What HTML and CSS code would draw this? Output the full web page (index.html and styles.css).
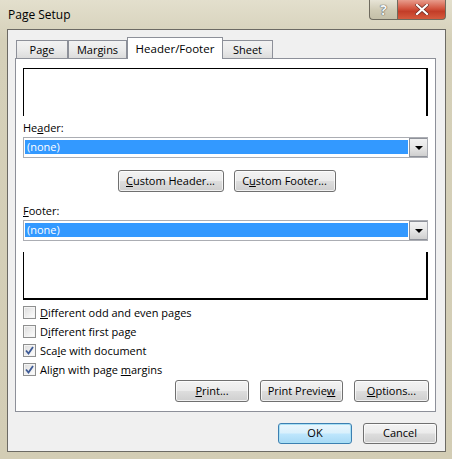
FILE: index.html
```html
<!DOCTYPE html>
<html>
<head>
<meta charset="utf-8">
<link rel="stylesheet" href="styles.css">
</head>
<body>
<div class="window">
  <div class="titlebar">
    <span class="title">Page Setup</span>
    <div class="caption-btns">
      <div class="cap help">?</div>
      <div class="cap close">
        <svg width="14" height="11" viewBox="0 0 14 11"><path d="M2 1 L12 10 M12 1 L2 10" stroke="#6b2a22" stroke-width="3.6" stroke-linecap="square"/><path d="M2 1 L12 10 M12 1 L2 10" stroke="#ffffff" stroke-width="2.2" stroke-linecap="square"/></svg>
      </div>
    </div>
  </div>
  <div class="client">
    <div class="tabs">
      <div class="tab t-page">Page</div>
      <div class="tab t-margins">Margins</div>
      <div class="tab active t-hf">Header/Footer</div>
      <div class="tab t-sheet">Sheet</div>
    </div>
    <div class="panel">
      <div class="preview preview-top"></div>
      <div class="label">He<u>a</u>der:</div>
      <div class="combo">
        <div class="combo-value">(none)</div>
        <div class="combo-btn"><span class="tri"></span></div>
      </div>
      <div class="row-center">
        <div class="btn btn-ch"><u>C</u>ustom Header...</div>
        <div class="btn btn-cf">C<u>u</u>stom Footer...</div>
      </div>
      <div class="label label-footer"><u>F</u>ooter:</div>
      <div class="combo">
        <div class="combo-value">(none)</div>
        <div class="combo-btn"><span class="tri"></span></div>
      </div>
      <div class="preview preview-bottom"></div>
      <div class="checks">
        <div class="check"><span class="box"></span><span><u>D</u>ifferent odd and even pages</span></div>
        <div class="check"><span class="box"></span><span>D<u>i</u>fferent first page</span></div>
        <div class="check"><span class="box"><svg width="11" height="11" viewBox="0 0 11 11"><path d="M2 5.5 L4.5 8.5 L9 2" fill="none" stroke="#3d5a96" stroke-width="1.8"/></svg></span><span>Sca<u>l</u>e with document</span></div>
        <div class="check"><span class="box"><svg width="11" height="11" viewBox="0 0 11 11"><path d="M2 5.5 L4.5 8.5 L9 2" fill="none" stroke="#3d5a96" stroke-width="1.8"/></svg></span><span>Align with page <u>m</u>argins</span></div>
      </div>
      <div class="row-end">
        <div class="btn btn-print"><u>P</u>rint...</div>
        <div class="btn btn-preview">Print Previe<u>w</u></div>
        <div class="btn btn-options"><u>O</u>ptions...</div>
      </div>
    </div>
    <div class="dialog-btns">
      <div class="btn btn-ok default">OK</div>
      <div class="btn btn-cancel">Cancel</div>
    </div>
  </div>
</div>
</body>
</html>
```
FILE: styles.css
```css
html, body {
  margin: 0;
  padding: 0;
}
body {
  font-family: "Open Sans", "Noto Sans", sans-serif;
  font-size: 11px;
  color: #000;
  background: #d6d1bb;
}
.window {
  width: 452px;
  height: 459px;
  background: linear-gradient(#e3dfcd, #d5d0b9 40px, #d3cdb5);
  box-sizing: border-box;
  overflow: hidden;
}
.titlebar {
  height: 29px;
  display: flex;
  align-items: flex-start;
  padding: 0 6px 0 8px;
  box-sizing: border-box;
}
.title {
  font-size: 12px;
  line-height: 30px;
}
.caption-btns {
  margin-left: auto;
  display: flex;
}
.cap {
  height: 20px;
  box-sizing: border-box;
  border: 1px solid #6e6a5e;
  border-top: none;
  display: flex;
  align-items: center;
  justify-content: center;
}
.help {
  width: 28px;
  border-radius: 0 0 0 4px;
  border-right: none;
  background: linear-gradient(#e7e4d6, #cfcab4 55%, #c4bfa8);
  color: #f5f5f5;
  font-weight: bold;
  font-size: 14px;
  text-shadow: 0 0 1px #444, 0 0 1px #444;
}
.close {
  width: 49px;
  border-radius: 0 0 4px 0;
  background: linear-gradient(#e89c8c, #d2543f 45%, #c33d28 60%, #d55b3e);
}
.client {
  margin: 0 6px 0 7px;
  height: 423px;
  box-sizing: border-box;
  border: 1px solid #6c6a64;
  background: #f0f0f0;
}
.tabs {
  display: flex;
  align-items: flex-end;
  height: 21px;
  margin: 7px 0 0 8px;
}
.tab {
  height: 18px;
  box-sizing: border-box;
  border: 1px solid #8d9099;
  border-bottom: none;
  background: linear-gradient(#f2f2f2, #ebebeb 50%, #dcdcdc);
  text-align: center;
  line-height: 18px;
}
.t-page { width: 52px; }
.t-margins { width: 59px; }
.t-hf { width: 96px; }
.t-sheet { width: 51px; margin-left: -1px; }
.tab.active {
  height: 22px;
  margin-bottom: -1px;
  background: #fff;
  position: relative;
  z-index: 1;
  line-height: 21px;
  font-size: 11.5px;
}
.panel {
  margin-left: 7px;
  width: 421px;
  height: 354px;
  box-sizing: border-box;
  border: 1px solid #8d9099;
  background: #fff;
  padding: 9px 6px 0 7px;
}
.preview {
  height: 48px;
  box-sizing: border-box;
  width: 405px;
}
.preview-top {
  border-top: 1px solid #000;
  border-left: 1px solid #000;
  border-right: 2px solid #000;
}
.preview-bottom {
  margin-top: 11px;
  border-bottom: 2px solid #000;
  border-left: 1px solid #000;
  border-right: 2px solid #000;
}
.label {
  margin-top: 4px;
  line-height: 15px;
  height: 15px;
}
.label-footer {
  margin-top: 11px;
}
u {
  text-decoration: underline;
  text-underline-offset: 1px;
}
.combo {
  margin-top: 2px;
  width: 405px;
  height: 21px;
  box-sizing: border-box;
  border: 1px solid #abadb3;
  display: flex;
  padding: 0 0 0 1px;
}
.combo-value {
  flex: 1;
  margin: 2px 1px 3px 0;
  background: #3399ff;
  color: #fff;
  line-height: 14px;
  padding-left: 2px;
}
.combo-btn {
  width: 18px;
  box-sizing: border-box;
  border: 1px solid #8f929a;
  border-right: none;
  margin: 0;
  background: linear-gradient(#f2f2f2, #e6e6e6 50%, #cfcfcf);
  display: flex;
  align-items: center;
  justify-content: center;
}
.tri {
  width: 0;
  height: 0;
  border-left: 4px solid transparent;
  border-right: 4px solid transparent;
  border-top: 4px solid #000;
  margin-left: 1px;
}
.btn {
  height: 22px;
  box-sizing: border-box;
  border: 1px solid #707070;
  border-radius: 3px;
  background: linear-gradient(#f3f3f3, #ebebeb 48%, #dddddd 52%, #cfcfcf);
  box-shadow: inset 0 0 0 1px rgba(255,255,255,0.7);
  text-align: center;
  line-height: 19px;
}
.row-center {
  margin-top: 12px;
  display: flex;
  justify-content: center;
  gap: 10px;
  padding-left: 1px;
}
.btn-ch { width: 106px; }
.btn-cf { width: 102px; }
.checks {
  margin-top: 3px;
}
.check {
  height: 19px;
  display: flex;
  align-items: center;
}
.box {
  width: 13px;
  height: 13px;
  box-sizing: border-box;
  border: 1px solid #8e8f8f;
  background: linear-gradient(135deg, #dcdcdc, #f4f4f4 70%, #fff);
  box-shadow: inset 0 0 0 1px #f4f4f4;
  margin-right: 4px;
  display: flex;
  align-items: center;
  justify-content: center;
}
.row-end {
  margin-top: 1px;
  display: flex;
  justify-content: flex-end;
  gap: 11px;
}
.btn-print { width: 74px; }
.btn-preview { width: 83px; }
.btn-options { width: 75px; }
.dialog-btns {
  margin: 11px 8px 0 0;
  display: flex;
  justify-content: flex-end;
  gap: 11px;
}
.btn-ok, .btn-cancel {
  width: 74px;
  height: 21px;
  line-height: 18px;
}
.btn.default {
  border-color: #3c7fb1;
  box-shadow: inset 0 0 0 1px #a8e0f5;
  background: linear-gradient(#eaf6fd, #d9f0fc 48%, #bee6fd 52%, #a7d9f5);
}
```
